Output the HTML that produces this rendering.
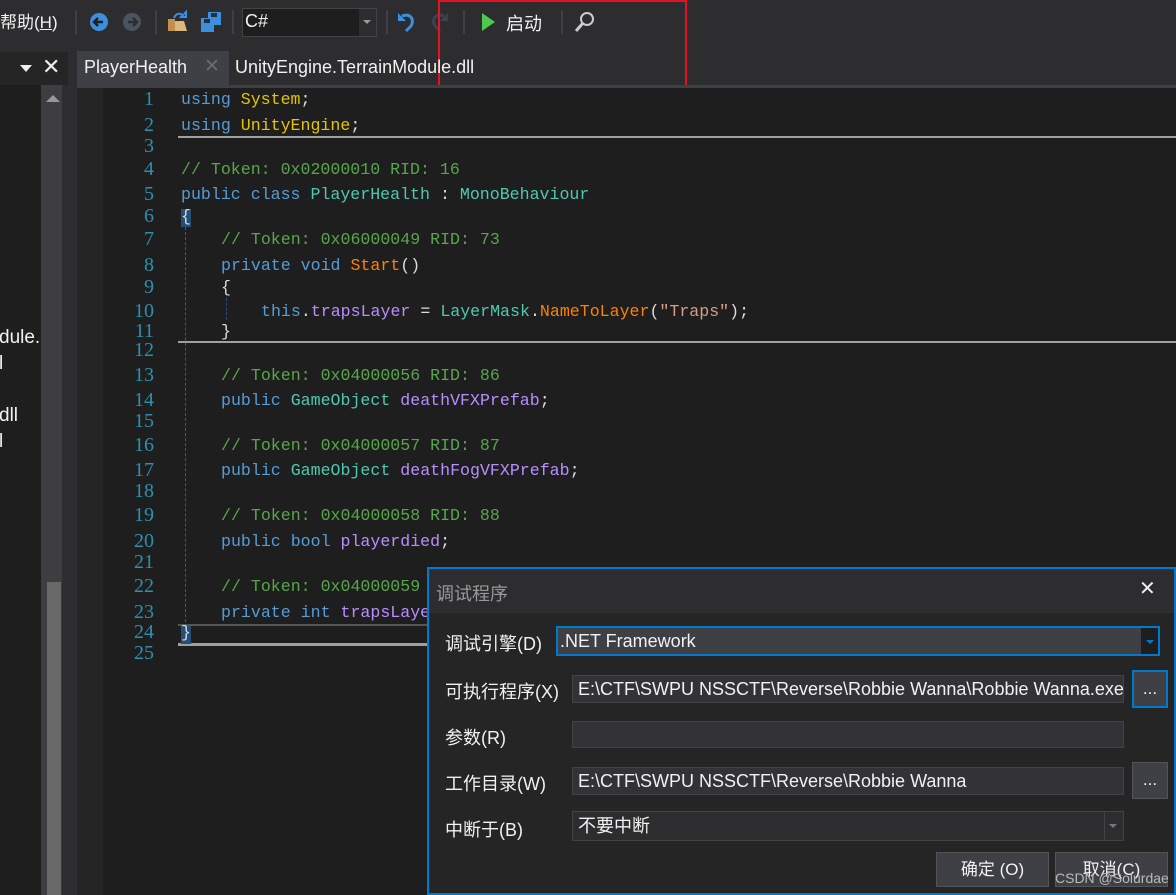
<!DOCTYPE html>
<html><head><meta charset="utf-8"><style>
*{margin:0;padding:0;box-sizing:border-box}
body{width:1176px;height:895px;overflow:hidden;background:#2d2d30;position:relative;font-family:"Liberation Sans","Noto Sans CJK SC",sans-serif;color:#f1f1f1}
.a{position:absolute}
.code{position:absolute;font-family:"Liberation Mono","Noto Sans CJK SC",monospace;font-size:16.6px;white-space:pre;line-height:20px}
.ln{color:#2b91af;width:42px;text-align:right;left:112px;font-family:"Liberation Serif",serif;font-size:20px}
.k{color:#569cd6}.t{color:#4ec9b0}.c{color:#57a64a}.m{color:#ff8000}.f{color:#b88eff}.y{color:#e5c400}.s{color:#d69d85}.p{color:#dcdcdc}
.lbl{position:absolute;left:445px;font-size:18px;color:#f1f1f1}
.box{position:absolute;background:#333337;border:1px solid #434346;font-size:18px;color:#f1f1f1;padding-left:5px;line-height:30px}
.btn{position:absolute;background:#3f3f46;border:1px solid #555;font-size:17px;text-align:center;color:#f1f1f1}
</style></head><body>
<!-- toolbar -->
<div class="a" style="left:0;top:8px;font-size:17px">帮助(<u>H</u>)</div>
<div class="a" style="left:75px;top:10px;width:2px;height:24px;background:#3f3f46"></div>
<svg class="a" style="left:89px;top:12px" width="20" height="20"><circle cx="10" cy="10" r="9" fill="#3c8ede"/><path d="M14 10H6M9 6l-4 4 4 4" stroke="#1e1e1e" stroke-width="2.5" fill="none"/></svg>
<svg class="a" style="left:122px;top:12px" width="20" height="20"><circle cx="10" cy="10" r="9" fill="#4a5460"/><path d="M6 10h8M11 6l4 4-4 4" stroke="#2d2d30" stroke-width="2.5" fill="none"/></svg>
<div class="a" style="left:155px;top:10px;width:2px;height:24px;background:#3f3f46"></div>
<svg class="a" style="left:166px;top:10px" width="24" height="24"><path d="M2 11h16l3 10H4z" fill="#dcb67a"/><path d="M2 9h7v12H2z" fill="#c09050"/><path d="M8 8c2-5 6-5 9-3l-2 2h5V2l-2 2" stroke="#3c8ede" stroke-width="2" fill="none"/></svg>
<svg class="a" style="left:199px;top:10px" width="24" height="24"><rect x="2" y="8" width="13" height="14" fill="#3c8ede"/><rect x="9" y="2" width="13" height="13" fill="#3c8ede"/><rect x="5" y="9" width="6" height="4" fill="#2d2d30"/><rect x="12" y="3" width="6" height="4" fill="#2d2d30"/></svg>
<div class="a" style="left:232px;top:10px;width:2px;height:24px;background:#3f3f46"></div>
<div class="a" style="left:242px;top:8px;width:135px;height:29px;background:#1e1e1e;border:1px solid #434346"></div>
<div class="a" style="left:245px;top:11px;font-size:18px">C#</div>
<div class="a" style="left:359px;top:9px;width:17px;height:27px;background:#2d2d30"></div>
<div class="a" style="left:363px;top:20px;border:4px solid transparent;border-top:4px solid #999"></div>
<div class="a" style="left:386px;top:10px;width:2px;height:24px;background:#3f3f46"></div>
<svg class="a" style="left:396px;top:10px" width="22" height="24"><path d="M6 6c8-3 13 3 9 10l-5 5" stroke="#3c8ede" stroke-width="3" fill="none"/><path d="M2 3v8h8z" fill="#3c8ede"/></svg>
<svg class="a" style="left:428px;top:10px" width="22" height="24"><path d="M16 6c-8-3-13 3-9 10l5 5" stroke="#3a4450" stroke-width="3" fill="none"/><path d="M20 3v8h-8z" fill="#3a4450"/></svg>
<div class="a" style="left:463px;top:10px;width:2px;height:24px;background:#3f3f46"></div>
<svg class="a" style="left:480px;top:12px" width="16" height="20"><path d="M2 1l13 9-13 9z" fill="#4ec94e"/></svg>
<div class="a" style="left:506px;top:10px;font-size:18px">启动</div>
<div class="a" style="left:561px;top:10px;width:2px;height:24px;background:#3f3f46"></div>
<svg class="a" style="left:573px;top:10px" width="24" height="24"><circle cx="14" cy="9" r="6" stroke="#ccc" stroke-width="2" fill="none"/><path d="M10 13l-7 8" stroke="#ccc" stroke-width="3"/></svg>
<div class="a" style="left:438px;top:0;width:249px;height:88px;border:2px solid #e81123"></div>
<!-- left panel -->
<div class="a" style="left:0;top:52px;width:68px;height:33px;background:#252526"></div>
<div class="a" style="left:20px;top:65px;border:6px solid transparent;border-top:7px solid #eee"></div>
<div class="a" style="left:42px;top:54px;font-size:22px;color:#eee">✕</div>
<div class="a" style="left:0;top:85px;width:41px;height:810px;background:#1e1e1e"></div>
<div class="a" style="left:41px;top:85px;width:21px;height:810px;background:#3e3e42"></div>
<div class="a" style="left:47px;top:582px;width:14px;height:313px;background:#686868"></div>
<div class="a" style="left:46px;top:95px;border:7px solid transparent;border-bottom:7px solid #999;border-top:0"></div>
<div class="a" style="left:62px;top:85px;width:6px;height:810px;background:#2d2d30"></div>
<div class="a" style="left:0;top:325px;width:41px;height:130px;overflow:hidden"><div style="position:absolute;left:-1px;top:0;font-size:19px;line-height:26px;color:#f1f1f1;white-space:pre">dule.c
l

dll
l</div></div>
<!-- tabs -->
<div class="a" style="left:77px;top:51px;width:152px;height:34px;background:#3f3f46"></div>
<div class="a" style="left:84px;top:57px;font-size:18px">PlayerHealth</div>
<div class="a" style="left:204px;top:55px;font-size:19px;color:#6b6b70">✕</div>
<div class="a" style="left:235px;top:57px;font-size:18px">UnityEngine.TerrainModule.dll</div>
<div class="a" style="left:77px;top:85px;width:1099px;height:3px;background:#3f3f46"></div>
<!-- editor -->
<div class="a" style="left:77px;top:88px;width:1099px;height:807px;background:#1e1e1e"></div>
<div class="a" style="left:77px;top:88px;width:26px;height:807px;background:#252526"></div>
<div class="a" style="left:178px;top:136px;width:998px;height:2px;background:#a0a0a0"></div>
<div class="a" style="left:178px;top:341px;width:998px;height:2px;background:#a0a0a0"></div>
<div class="a" style="left:178px;top:624px;width:260px;height:22px;border-top:2px solid #555;border-bottom:3px solid #a0a0a0"></div>
<div class="a" style="left:181px;top:209px;width:10px;height:18px;background:#264f78"></div>
<div class="a" style="left:181px;top:626px;width:10px;height:18px;background:#264f78"></div>
<div class="a" style="left:185px;top:227px;height:395px;border-left:1px dashed #2a6a5a"></div>
<div class="a" style="left:226px;top:298px;height:22px;border-left:1px dashed #264f78"></div>

<div class="code ln" style="top:89px">1</div><div class="code" style="left:181px;top:90px"><span class="k">using</span> <span class="y">System</span><span class="p">;</span></div>
<div class="code ln" style="top:115px">2</div><div class="code" style="left:181px;top:116px"><span class="k">using</span> <span class="y">UnityEngine</span><span class="p">;</span></div>
<div class="code ln" style="top:136px">3</div>
<div class="code ln" style="top:159px">4</div><div class="code c" style="left:181px;top:160px">// Token: 0x02000010 RID: 16</div>
<div class="code ln" style="top:184px">5</div><div class="code" style="left:181px;top:185px"><span class="k">public class</span> <span class="t">PlayerHealth</span> <span class="p">:</span> <span class="t">MonoBehaviour</span></div>
<div class="code ln" style="top:206px">6</div><div class="code p" style="left:181px;top:207px">{</div>
<div class="code ln" style="top:229px">7</div><div class="code c" style="left:221px;top:230px">// Token: 0x06000049 RID: 73</div>
<div class="code ln" style="top:255px">8</div><div class="code" style="left:221px;top:256px"><span class="k">private void</span> <span class="m">Start</span><span class="p">()</span></div>
<div class="code ln" style="top:277px">9</div><div class="code p" style="left:221px;top:278px">{</div>
<div class="code ln" style="top:301px">10</div><div class="code" style="left:261px;top:302px"><span class="k">this</span><span class="p">.</span><span class="f">trapsLayer</span> <span class="p">=</span> <span class="t">LayerMask</span><span class="p">.</span><span class="m">NameToLayer</span><span class="p">(</span><span class="s">"Traps"</span><span class="p">);</span></div>
<div class="code ln" style="top:321px">11</div><div class="code p" style="left:221px;top:322px">}</div>
<div class="code ln" style="top:340px">12</div>
<div class="code ln" style="top:365px">13</div><div class="code c" style="left:221px;top:366px">// Token: 0x04000056 RID: 86</div>
<div class="code ln" style="top:390px">14</div><div class="code" style="left:221px;top:391px"><span class="k">public</span> <span class="t">GameObject</span> <span class="f">deathVFXPrefab</span><span class="p">;</span></div>
<div class="code ln" style="top:411px">15</div>
<div class="code ln" style="top:435px">16</div><div class="code c" style="left:221px;top:436px">// Token: 0x04000057 RID: 87</div>
<div class="code ln" style="top:460px">17</div><div class="code" style="left:221px;top:461px"><span class="k">public</span> <span class="t">GameObject</span> <span class="f">deathFogVFXPrefab</span><span class="p">;</span></div>
<div class="code ln" style="top:481px">18</div>
<div class="code ln" style="top:505px">19</div><div class="code c" style="left:221px;top:506px">// Token: 0x04000058 RID: 88</div>
<div class="code ln" style="top:531px">20</div><div class="code" style="left:221px;top:532px"><span class="k">public bool</span> <span class="f">playerdied</span><span class="p">;</span></div>
<div class="code ln" style="top:552px">21</div>
<div class="code ln" style="top:576px">22</div><div class="code c" style="left:221px;top:577px">// Token: 0x04000059</div>
<div class="code ln" style="top:602px">23</div><div class="code" style="left:221px;top:603px"><span class="k">private int</span> <span class="f">trapsLaye</span></div>
<div class="code ln" style="top:622px">24</div><div class="code p" style="left:181px;top:623px">}</div>
<div class="code ln" style="top:643px">25</div>
<!-- dialog -->
<div class="a" style="left:427px;top:567px;width:749px;height:328px;background:#252526;border:2px solid #007acc"></div>
<div class="a" style="left:429px;top:569px;width:745px;height:44px;background:#2d2d30"></div>
<div class="a" style="left:436px;top:580px;font-size:18px;color:#999">调试程序</div>
<div class="a" style="left:1139px;top:576px;font-size:20px;color:#eee">✕</div>
<div class="lbl" style="top:630px">调试引擎(D)</div>
<div class="box" style="left:556px;top:626px;width:604px;height:30px;border:2px solid #007acc;background:#3f3f46;line-height:26px;padding-left:2px">.NET Framework</div>
<div class="a" style="left:1141px;top:628px;width:17px;height:26px;background:#1e1e1e"></div>
<div class="a" style="left:1146px;top:640px;border:4px solid transparent;border-top:4px solid #007acc"></div>
<div class="lbl" style="top:678px">可执行程序(X)</div>
<div class="box" style="left:572px;top:675px;width:552px;height:28px;line-height:26px;overflow:hidden;white-space:nowrap">E:\CTF\SWPU NSSCTF\Reverse\Robbie Wanna\Robbie Wanna.exe</div>
<div class="btn" style="left:1132px;top:670px;width:36px;height:38px;border:2px solid #007acc;line-height:34px">...</div>
<div class="lbl" style="top:724px">参数(R)</div>
<div class="box" style="left:572px;top:721px;width:552px;height:27px"></div>
<div class="lbl" style="top:770px">工作目录(W)</div>
<div class="box" style="left:572px;top:767px;width:552px;height:28px;line-height:26px">E:\CTF\SWPU NSSCTF\Reverse\Robbie Wanna</div>
<div class="btn" style="left:1132px;top:762px;width:36px;height:37px;line-height:34px">...</div>
<div class="lbl" style="top:816px">中断于(B)</div>
<div class="box" style="left:572px;top:811px;width:552px;height:30px;background:#2d2d30;line-height:28px">不要中断</div>
<div class="a" style="left:1104px;top:812px;width:19px;height:28px;border-left:1px solid #434346"></div>
<div class="a" style="left:1109px;top:824px;border:4px solid transparent;border-top:4px solid #777"></div>
<div class="btn" style="left:936px;top:852px;width:113px;height:35px;line-height:33px">确定 (O)</div>
<div class="btn" style="left:1055px;top:852px;width:113px;height:35px;line-height:33px">取消(C)</div>
<div class="a" style="left:1055px;top:870px;font-size:14px;color:#bbb">CSDN @Solurdae</div>
</body></html>
